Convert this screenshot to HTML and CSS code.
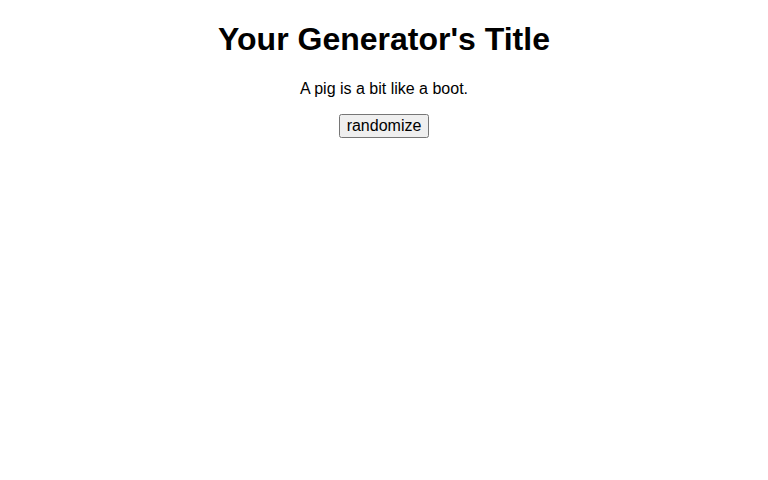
FILE: index.html
```html
<!DOCTYPE html>
<html>
<head>
<meta charset="utf-8">
<link rel="stylesheet" href="styles.css">
</head>
<body>
<div class="page">
  <h1 class="title">Your Generator's Title</h1>
  <p class="output">A pig is a bit like a boot.</p>
  <button class="randomize">randomize</button>
</div>
</body>
</html>
```
FILE: styles.css
```css
body {
  margin: 0;
  font-family: "Liberation Sans", Arial, sans-serif;
  background: #ffffff;
  color: #000000;
}
.page {
  text-align: center;
}
.title {
  font-size: 32px;
  font-weight: bold;
  margin: 21.44px 0;
}
.output {
  font-size: 16px;
  margin: 16px 0;
}
.randomize {
  font-family: "Liberation Sans", Arial, sans-serif;
  font-size: 16px;
}
```
